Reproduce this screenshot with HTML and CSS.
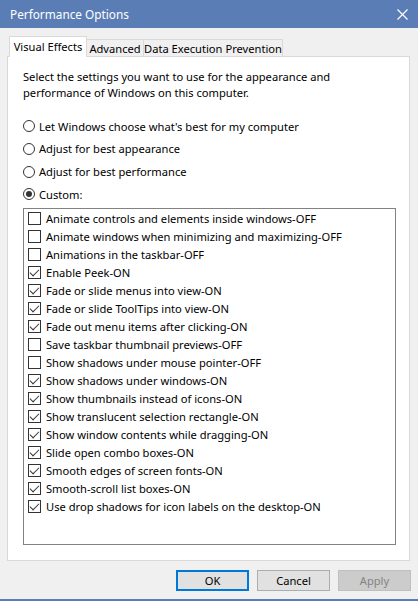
FILE: index.html
```html
<!DOCTYPE html>
<html lang="en">
<head>
  <meta charset="UTF-8">
  <title>Performance Options</title>
  <link rel="stylesheet" href="styles.css">
</head>
<body>
  <div class="titlebar">
    <span class="title">Performance Options</span>
    <svg class="close-icon" width="11" height="11" viewBox="0 0 11 11">
      <path d="M0.5 0.5 L10.5 10.5 M10.5 0.5 L0.5 10.5" stroke="#ffffff" stroke-width="1.2" fill="none"/>
    </svg>
  </div>

  <!-- Tabs -->
  <div class="tabs">
    <div class="tab tab-active tab-visual">Visual Effects</div>
    <div class="tab tab-advanced">Advanced</div>
    <div class="tab tab-dep">Data Execution Prevention</div>
  </div>

  <div class="panel">
    <p class="intro">Select the settings you want to use for the appearance and<br>performance of Windows on this computer.</p>

    <div class="radios">
      <div class="radio-row"><span class="radio"></span>Let Windows choose what's best for my computer</div>
      <div class="radio-row"><span class="radio"></span>Adjust for best appearance</div>
      <div class="radio-row"><span class="radio"></span>Adjust for best performance</div>
      <div class="radio-row"><span class="radio radio-on"></span>Custom:</div>
    </div>

    <div class="list">
      <div class="item"><span class="box"></span>Animate controls and elements inside windows-OFF</div>
      <div class="item"><span class="box"></span>Animate windows when minimizing and maximizing-OFF</div>
      <div class="item"><span class="box"></span>Animations in the taskbar-OFF</div>
      <div class="item"><span class="box checked"></span>Enable Peek-ON</div>
      <div class="item"><span class="box checked"></span>Fade or slide menus into view-ON</div>
      <div class="item"><span class="box checked"></span>Fade or slide ToolTips into view-ON</div>
      <div class="item"><span class="box checked"></span>Fade out menu items after clicking-ON</div>
      <div class="item"><span class="box"></span>Save taskbar thumbnail previews-OFF</div>
      <div class="item"><span class="box"></span>Show shadows under mouse pointer-OFF</div>
      <div class="item"><span class="box checked"></span>Show shadows under windows-ON</div>
      <div class="item"><span class="box checked"></span>Show thumbnails instead of icons-ON</div>
      <div class="item"><span class="box checked"></span>Show translucent selection rectangle-ON</div>
      <div class="item"><span class="box checked"></span>Show window contents while dragging-ON</div>
      <div class="item"><span class="box checked"></span>Slide open combo boxes-ON</div>
      <div class="item"><span class="box checked"></span>Smooth edges of screen fonts-ON</div>
      <div class="item"><span class="box checked"></span>Smooth-scroll list boxes-ON</div>
      <div class="item"><span class="box checked"></span>Use drop shadows for icon labels on the desktop-ON</div>
    </div>
  </div>

  <div class="actions">
    <button class="btn btn-default">OK</button>
    <button class="btn">Cancel</button>
    <button class="btn btn-disabled">Apply</button>
  </div>

  <div class="edge"></div>
</body>
</html>
```

FILE: styles.css
```css
/* Reset */
* {
  margin: 0;
  padding: 0;
  box-sizing: border-box;
}

body {
  width: 418px;
  height: 601px;
  overflow: hidden;
  background: #f0f0f0;
  font-family: "Noto Sans", sans-serif;
  font-size: 11.15px;
  color: #000;
}

/* Title bar */
.titlebar {
  height: 28px;
  background: #5a7db5;
  color: #fff;
  display: flex;
  align-items: center;
  justify-content: space-between;
  padding: 0 10px 0 10px;
}

.title {
  font-size: 11.8px;
}

.close-icon {
  flex-shrink: 0;
  display: block;
  margin-top: 1px;
}

/* Tabs */
.tabs {
  height: 28px;
  display: flex;
  align-items: flex-end;
  padding-left: 9px;
}

.tab {
  height: 17px;
  display: flex;
  align-items: center;
  justify-content: center;
  white-space: nowrap;
  border: 1px solid #d9d9d9;
  border-bottom: none;
  background: #f0f0f0;
  margin-left: -1px;
}

.tab-active {
  position: relative;
  z-index: 1;
  height: 21px;
  margin-bottom: -1px;
  margin-left: 0;
  background: #fff;
  padding-bottom: 2px;
}

.tab-visual { width: 78px; }
.tab-advanced { width: 58px; }
.tab-dep { width: 140px; }

/* Panel */
.panel {
  margin-left: 7px;
  width: 403px;
  height: 505px;
  background: #fff;
  border: 1px solid #d9d9d9;
  padding: 12px 0 0 15px;
}

.intro {
  line-height: 16px;
}

.radios {
  margin-top: 14px;
}

.radio-row {
  height: 22.67px;
  display: flex;
  align-items: center;
  gap: 4px;
}

.radio {
  width: 12px;
  height: 12px;
  border: 1px solid #333;
  border-radius: 50%;
  display: flex;
  align-items: center;
  justify-content: center;
}

.radio-on::after {
  content: "";
  width: 6px;
  height: 6px;
  border-radius: 50%;
  background: #333;
}

/* Check list */
.list {
  margin-top: 2px;
  width: 373px;
  height: 337px;
  border: 1px solid #828282;
  padding: 1px 0 0 4px;
}

.item {
  height: 18px;
  display: flex;
  align-items: center;
  gap: 5px;
}

.box {
  width: 13px;
  height: 13px;
  border: 1px solid #333;
  flex-shrink: 0;
  position: relative;
}

.box.checked::after {
  content: "";
  position: absolute;
  left: 3px;
  top: 0px;
  width: 4px;
  height: 8px;
  border-right: 1px solid #333;
  border-bottom: 1px solid #333;
  transform: rotate(45deg);
}

/* Buttons */
.actions {
  display: flex;
  justify-content: flex-end;
  gap: 8px;
  padding: 9px 7px 0 0;
}

.btn {
  width: 73px;
  height: 21px;
  font-family: inherit;
  font-size: 11.15px;
  color: #000;
  background: #e1e1e1;
  border: 1px solid #adadad;
}

.btn-default {
  border: 2px solid #0078d7;
}

.btn-disabled {
  background: #cccccc;
  border-color: #bfbfbf;
  color: #838383;
}

.edge {
  margin-top: 8px;
  height: 2px;
  background: #5a7db5;
}
```
